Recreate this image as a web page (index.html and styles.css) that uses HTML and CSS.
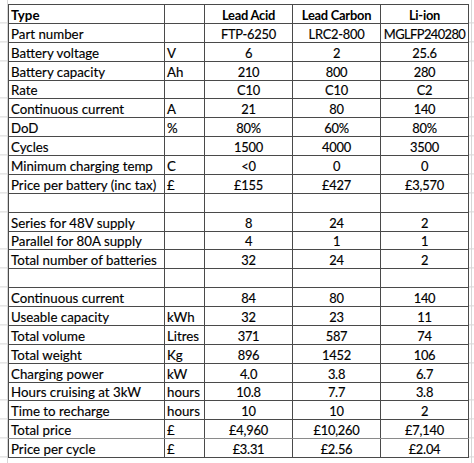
FILE: index.html
```html
<!DOCTYPE html>
<html lang="en">
<head>
<meta charset="utf-8">
<title>Battery comparison</title>
<link rel="stylesheet" href="styles.css">
</head>
<body>
<div class="sheet">
<table class="grid">
  <colgroup>
    <col class="c-label"><col class="c-unit"><col class="c-val"><col class="c-val"><col class="c-val">
  </colgroup>
  <tbody>
    <tr class="head"><td>Type</td><td></td><td class="v">Lead Acid</td><td class="v">Lead Carbon</td><td class="v">Li-ion</td></tr>
    <tr><td>Part number</td><td></td><td class="v">FTP-6250</td><td class="v">LRC2-800</td><td class="v tight">MGLFP240280</td></tr>
    <tr><td>Battery voltage</td><td>V</td><td class="v">6</td><td class="v">2</td><td class="v">25.6</td></tr>
    <tr><td>Battery capacity</td><td>Ah</td><td class="v">210</td><td class="v">800</td><td class="v">280</td></tr>
    <tr><td>Rate</td><td></td><td class="v">C10</td><td class="v">C10</td><td class="v">C2</td></tr>
    <tr><td>Continuous current</td><td>A</td><td class="v">21</td><td class="v">80</td><td class="v">140</td></tr>
    <tr><td>DoD</td><td>%</td><td class="v">80%</td><td class="v">60%</td><td class="v">80%</td></tr>
    <tr><td>Cycles</td><td></td><td class="v">1500</td><td class="v">4000</td><td class="v">3500</td></tr>
    <tr><td>Minimum charging temp</td><td>C</td><td class="v">&lt;0</td><td class="v">0</td><td class="v">0</td></tr>
    <tr><td>Price per battery (inc tax)</td><td>£</td><td class="v">£155</td><td class="v">£427</td><td class="v">£3,570</td></tr>
    <tr><td></td><td></td><td></td><td></td><td></td></tr>
    <tr><td>Series for 48V supply</td><td></td><td class="v">8</td><td class="v">24</td><td class="v">2</td></tr>
    <tr><td>Parallel for 80A supply</td><td></td><td class="v">4</td><td class="v">1</td><td class="v">1</td></tr>
    <tr><td>Total number of batteries</td><td></td><td class="v">32</td><td class="v">24</td><td class="v">2</td></tr>
    <tr><td></td><td></td><td></td><td></td><td></td></tr>
    <tr><td>Continuous current</td><td></td><td class="v">84</td><td class="v">80</td><td class="v">140</td></tr>
    <tr><td>Useable capacity</td><td>kWh</td><td class="v">32</td><td class="v">23</td><td class="v">11</td></tr>
    <tr><td>Total volume</td><td>Litres</td><td class="v">371</td><td class="v">587</td><td class="v">74</td></tr>
    <tr><td>Total weight</td><td>Kg</td><td class="v">896</td><td class="v">1452</td><td class="v">106</td></tr>
    <tr><td>Charging power</td><td>kW</td><td class="v">4.0</td><td class="v">3.8</td><td class="v">6.7</td></tr>
    <tr><td>Hours cruising at 3kW</td><td>hours</td><td class="v">10.8</td><td class="v">7.7</td><td class="v">3.8</td></tr>
    <tr><td>Time to recharge</td><td>hours</td><td class="v">10</td><td class="v">10</td><td class="v">2</td></tr>
    <tr class="total"><td>Total price</td><td>£</td><td class="v">£4,960</td><td class="v">£10,260</td><td class="v">£7,140</td></tr>
    <tr class="last"><td>Price per cycle</td><td>£</td><td class="v">£3.31</td><td class="v">£2.56</td><td class="v">£2.04</td></tr>
  </tbody>
</table>
</div>
</body>
</html>
```
FILE: styles.css
```css
html, body {
  margin: 0;
  padding: 0;
  background: #ffffff;
}

body {
  width: 474px;
  height: 463px;
  overflow: hidden;
  font-family: "Lato", "Open Sans", "Liberation Sans", sans-serif;
  font-size: 13.3px;
  color: #000000;
  background-color: #ffffff;
  background-image:
    linear-gradient(to right, transparent 7px, #d6d6d6 7px, #d6d6d6 8px, transparent 8px),
    linear-gradient(to right, transparent 471px, #d6d6d6 471px, #d6d6d6 472px, transparent 472px),
    repeating-linear-gradient(to bottom, transparent 0, transparent 17.875px, #d6d6d6 17.875px, #d6d6d6 18.875px);
  background-position: 0 0, 0 0, 0 4.4px;
}

.sheet {
  padding: 4px 0 0 8px;
}

.grid {
  border-collapse: collapse;
  table-layout: fixed;
  width: 461px;
  background: #ffffff;
  border: 1.5px solid #333333;
}

.c-label { width: 156px; }
.c-unit { width: 40px; }
.c-val { width: 88px; }

.grid tr {
  height: 18.875px;
}

.grid td {
  border: 1px solid #4a4a4a;
  padding: 0 2px 0 2px;
  vertical-align: bottom;
  line-height: 15px;
  white-space: nowrap;
  overflow: hidden;
  -webkit-text-stroke: 0.15px #000000;
}

.grid td.v {
  text-align: center;
  padding: 0 1px;
  font-size: 12.9px;
  letter-spacing: -0.25px;
}

.grid td.tight {
  letter-spacing: -0.6px;
}

.head td {
  font-weight: 700;
  -webkit-text-stroke: 0;
}

.total td {
  border-top: 1.5px solid #333333;
  border-bottom-color: #8a8a8a;
}
```
